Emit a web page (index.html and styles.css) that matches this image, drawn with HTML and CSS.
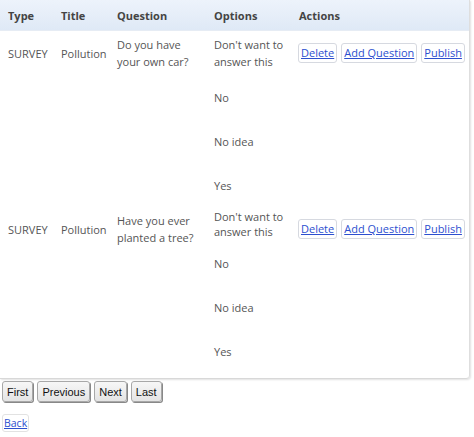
FILE: index.html
```html
<!DOCTYPE html>
<html>
<head>
<meta charset="utf-8">
<link rel="stylesheet" href="styles.css">
</head>
<body>
<div class="grid-wrap">
  <table class="grid">
    <colgroup>
      <col class="c-type"><col class="c-title"><col class="c-question"><col class="c-options"><col class="c-actions">
    </colgroup>
    <thead>
      <tr><th>Type</th><th>Title</th><th>Question</th><th>Options</th><th>Actions</th></tr>
    </thead>
    <tbody>
      <tr>
        <td><div class="cell">SURVEY</div></td>
        <td><div class="cell">Pollution</div></td>
        <td><div class="cell">Do you have your own car?</div></td>
        <td>
          <div class="opt">Don't want to answer this</div>
          <div class="opt">No</div>
          <div class="opt">No idea</div>
          <div class="opt">Yes</div>
        </td>
        <td><div class="cell actions"><a class="btn-link" href="#">Delete</a><a class="btn-link" href="#">Add Question</a><a class="btn-link" href="#">Publish</a></div></td>
      </tr>
      <tr>
        <td><div class="cell">SURVEY</div></td>
        <td><div class="cell">Pollution</div></td>
        <td><div class="cell">Have you ever planted a tree?</div></td>
        <td>
          <div class="opt first2">Don't want to answer this</div>
          <div class="opt">No</div>
          <div class="opt">No idea</div>
          <div class="opt">Yes</div>
        </td>
        <td><div class="cell actions"><a class="btn-link" href="#">Delete</a><a class="btn-link" href="#">Add Question</a><a class="btn-link" href="#">Publish</a></div></td>
      </tr>
    </tbody>
  </table>
</div>
<div class="pager">
  <button class="pbtn">First</button>
  <button class="pbtn">Previous</button>
  <button class="pbtn">Next</button>
  <button class="pbtn">Last</button>
</div>
<div class="back"><a class="back-link" href="#">Back</a></div>
</body>
</html>
```

FILE: styles.css
```css
html, body {
  margin: 0;
  padding: 0;
  background: #fff;
}
body {
  font-family: "Open Sans", "Noto Sans", sans-serif;
  font-size: 11px;
  color: #555;
}
.grid-wrap {
  width: 469px;
  border-right: 1px solid #dedede;
  border-bottom: 1px solid #d8d8d8;
  border-bottom-right-radius: 4px;
  box-shadow: 1px 1px 2px rgba(0,0,0,0.12);
}
.grid {
  width: 100%;
  border-collapse: collapse;
  table-layout: fixed;
}
.c-type { width: 53px; }
.c-title { width: 56px; }
.c-question { width: 97px; }
.c-options { width: 85px; }
.grid th {
  height: 30px;
  padding: 0 0 0 8px;
  text-align: left;
  font-weight: bold;
  color: #444;
  background: linear-gradient(#edf3fb, #dfe9f6);
  border-bottom: 1px solid #e6ecf4;
}
.grid td {
  padding: 0 6px 0 8px;
  vertical-align: top;
}
.cell {
  height: 44px;
  display: flex;
  align-items: center;
  line-height: 17px;
}
.opt {
  height: 44px;
  display: flex;
  align-items: center;
  line-height: 17px;
}
.opt.first2 { height: 34px; line-height: 15px; }
.actions {
  gap: 4px;
  white-space: nowrap;
  margin-left: -1px;
}
.btn-link {
  display: inline-block;
  padding: 1px 2px;
  border: 1px solid #d6d9e0;
  border-radius: 3px;
  background: #fff;
  color: #2d4fcf;
  text-decoration: underline;
  line-height: 16px;
  font-size: 11px;
}
.grid tbody tr:last-child td { padding-bottom: 5px; }
.pager {
  display: flex;
  gap: 4px;
  padding: 2px 0 0 2px;
}
.pbtn {
  font-family: "Liberation Sans", Arial, sans-serif;
  font-size: 11px;
  color: #111;
  height: 21px;
  padding: 0 4px;
  border: 1px solid #a8a8a8;
  border-radius: 3px;
  background: linear-gradient(#f7f7f7, #e4e4e4);
  box-shadow: 1px 1px 0 #888;
}
.back {
  padding: 12px 0 0 2px;
}
.back-link {
  display: inline-block;
  padding: 1px 1px;
  border: 1px solid #e2e2e2;
  border-radius: 3px;
  color: #2d4fcf;
  text-decoration: underline;
  font-size: 10.5px;
}
```
